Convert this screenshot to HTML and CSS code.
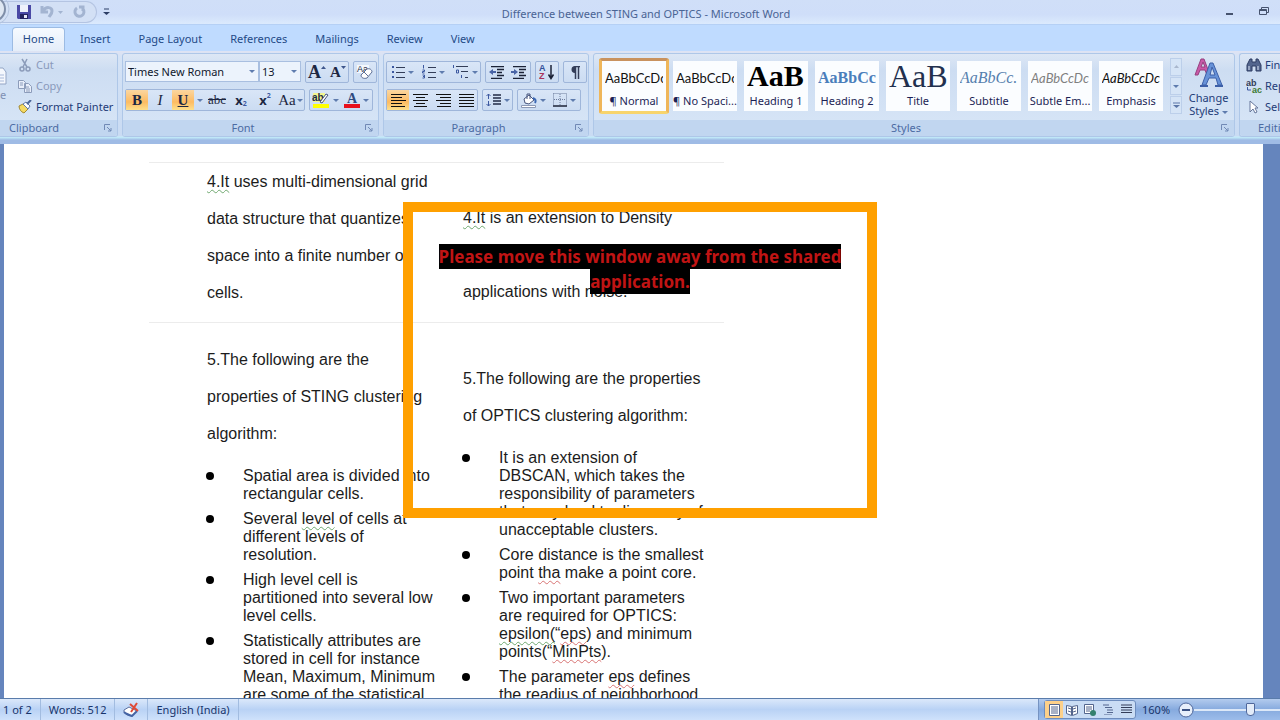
FILE: index.html
```html
<!DOCTYPE html>
<html lang="en">
<head>
<meta charset="utf-8">
<title>Difference between STING and OPTICS - Microsoft Word</title>
<link rel="stylesheet" href="styles.css">
</head>
<body>
<div class="app">
  <header class="titlebar">
    <div class="quick">
      <svg class="orb" width="12" height="24" viewBox="0 0 12 24"><circle cx="-7" cy="9" r="12" fill="#dfe7f2" stroke="#7f8ea8" stroke-width="2"/><circle cx="-7" cy="9" r="16" fill="none" stroke="#b3c4df"/></svg>
      <button class="qbtn" aria-label="Save"><svg width="14" height="14" viewBox="0 0 14 14"><path d="M0 0h14v14H1L0 13z" fill="#4a49a5"/><path d="M3 0h8v7H3z" fill="#eef1fb"/><path d="M3 9h8v5H3z" fill="#25245f"/><path d="M7 10h3v3H7z" fill="#e8e9f8"/></svg></button>
      <button class="qbtn" aria-label="Undo"><svg width="24" height="14" viewBox="0 0 24 14"><path d="M2 1v6h6M3 6C6 1 12 2 12 6c0 3-2 4-3 6" fill="none" stroke="#a3b4d1" stroke-width="3"/><path d="M18 6h5l-2.500 3z" fill="#a3b4d1"/></svg></button>
      <button class="qbtn" aria-label="Repeat"><svg width="13" height="14" viewBox="0 0 13 14"><path d="M4 3a4.500 4.500 0 1 0 6 1M6 2h4v4" fill="none" stroke="#a3b4d1" stroke-width="3"/></svg></button>
    </div>
    <button class="qmore" aria-label="Customize"><svg width="7" height="8" viewBox="0 0 7 8"><path d="M1 1h5" stroke="#2c3e66"/><path d="M0 4h7L3.500 7z" fill="#2c3e66"/></svg></button>
    <h1 class="title">Difference between STING and OPTICS - Microsoft Word</h1>
    <div class="winbtns">
      <button aria-label="Minimize"><svg width="8" height="10" viewBox="0 0 8 10"><path d="M0 7h7" stroke="#46536e" stroke-width="2"/></svg></button>
      <button aria-label="Restore"><svg width="10" height="10" viewBox="0 0 10 10"><path d="M2.500 2V.5h7v5H8M.5 2.500h7v5h-7zM.5 3.500h7" fill="none" stroke="#46536e"/></svg></button>
    </div>
  </header>

  <nav class="tabs">
    <button class="tab active">Home</button>
    <button class="tab">Insert</button>
    <button class="tab">Page Layout</button>
    <button class="tab">References</button>
    <button class="tab">Mailings</button>
    <button class="tab">Review</button>
    <button class="tab">View</button>
  </nav>

  <div class="ribbon">
    <section class="group clipboard">
      <div class="body clip-body">
        <div class="paste"><svg width="7" height="20" viewBox="0 0 7 20"><path d="M-2 2h5l3 4v12h-8z" fill="#f5f8fd" stroke="#93a5c4"/><path d="M0 9h4M0 12h4M0 15h4" stroke="#a9bada"/></svg><span>e</span></div>
        <div class="clip-list">
          <button class="cmd off"><svg width="14" height="14" viewBox="0 0 14 14"><path d="M4 1l5 8M9 1L5 9" stroke="#8c9cba" stroke-width="1.500"/><circle cx="4" cy="11" r="2" fill="none" stroke="#8c9cba" stroke-width="1.500"/><circle cx="10" cy="11" r="2" fill="none" stroke="#8c9cba" stroke-width="1.500"/></svg>Cut</button>
          <button class="cmd off"><svg width="14" height="14" viewBox="0 0 14 14"><path d="M.5 1.500h5l2 2v6h-7zM6.500 4.500h4l3 3v6h-7z" fill="#e8eefa" stroke="#8c9cba"/><path d="M2 4h3M2 6h3M8 8h3M8 10h4M8 12h4" stroke="#8c9cba"/></svg>Copy</button>
          <button class="cmd"><svg width="14" height="14" viewBox="0 0 14 14"><path d="M1 6l4-2 5 5-4 4c-3-1-5-4-5-7z" fill="#f5da62" stroke="#a38a35"/><path d="M5 4l3-2 4 4-2 3z" fill="#fff" stroke="#6178a4"/><path d="M9 4l4-4" stroke="#4a6597" stroke-width="2"/></svg>Format Painter</button>
        </div>
      </div>
      <footer><span>Clipboard</span><svg class="launch" width="8" height="8" viewBox="0 0 8 8"><path d="M.5 6V.5H6M3 3l4 4M7 4v3H4" fill="none" stroke="#7189b5"/></svg></footer>
    </section>

    <section class="group font">
      <div class="body rows">
        <div class="row">
          <div class="selects">
            <span class="sel sel-font"><select aria-label="Font"><option>Times New Roman</option></select></span>
            <span class="sel sel-size"><select aria-label="Font size"><option>13</option></select></span>
          </div>
          <div class="set"><button class="w22 serif big" aria-label="Grow font">A<svg width="5" height="14" viewBox="0 0 5 14"><path d="M0 4l2.500-3L5 4z" fill="#3e568c"/></svg></button><button class="w20 serif" aria-label="Shrink font">A<svg width="5" height="14" viewBox="0 0 5 14"><path d="M0 1h5L2.500 4z" fill="#3e568c"/></svg></button></div>
          <div class="set"><button class="w22" aria-label="Clear formatting"><svg width="18" height="16" viewBox="0 0 18 16"><path d="M1 1h12v8H1z" fill="#f4f8fd"/><text x="1" y="8" font-size="9" font-family="Liberation Sans" fill="#222b46">Aa</text><path d="M5 11l6-6c3-1 5 1 5 3l-5 6c-3 1-6 0-6-3z" fill="#fff" stroke="#5d6f96"/><path d="M8 8l4 4" stroke="#5d6f96"/></svg></button></div>
        </div>
        <div class="row">
          <div class="set">
            <button class="w22 serif on">B</button>
            <button class="w24 serif it">I</button>
            <button class="w22 serif on un">U</button>
            <button class="w12" aria-label="Underline style"><i class="arr"></i></button>
            <button class="w24 serif strike">abc</button>
            <button class="w24 scr" aria-label="Subscript">x<sub>2</sub></button>
            <button class="w24 scr" aria-label="Superscript">x<sup>2</sup></button>
            <button class="w27 aa serif">Aa<i class="arr"></i></button>
          </div>
          <div class="set">
            <button class="w32" aria-label="Highlight"><svg width="18" height="16" viewBox="0 0 18 16"><path d="M1 1h12v9H1z" fill="#f5f58f"/><text x="0" y="9" font-size="10" font-family="Liberation Sans" font-weight="bold" fill="#222b46">ab</text><path d="M8 10l6-8 2 1-6 8z" fill="#fff" stroke="#46547c"/><path d="M1 12h16v4H1z" fill="#ff0"/></svg><i class="arr"></i></button>
            <button class="w32" aria-label="Font color"><svg width="16" height="16" viewBox="0 0 16 16"><text x="3" y="11" font-size="14" font-family="Liberation Serif" font-weight="bold" fill="#2f4a80">A</text><path d="M0 12h16v4H0z" fill="#e8101c"/></svg><i class="arr"></i></button>
          </div>
        </div>
      </div>
      <footer><span>Font</span><svg class="launch" width="8" height="8" viewBox="0 0 8 8"><path d="M.5 6V.5H6M3 3l4 4M7 4v3H4" fill="none" stroke="#7189b5"/></svg></footer>
    </section>

    <section class="group para">
      <div class="body rows">
        <div class="row">
          <div class="set">
            <button class="w32" aria-label="Bullets"><svg width="14" height="14" viewBox="0 0 14 14"><path d="M5 2.500h9M5 7.500h9M5 12.500h9" stroke="#333d58"/><path d="M1 1h2v2H1zM1 6h2v2H1zM1 11h2v2H1z" fill="#3c58a0"/></svg><i class="arr"></i></button>
            <button class="w32" aria-label="Numbering"><svg width="14" height="14" viewBox="0 0 14 14"><path d="M6 2.500h8M6 7.500h8M6 12.500h8" stroke="#333d58"/><path d="M1.500 0v3.500M.5 5h2v1.500h-2V8h2M.5 10h2v3h-2M1 11.500h1" fill="none" stroke="#3c58a0"/></svg><i class="arr"></i></button>
            <button class="w32" aria-label="Multilevel list"><svg width="17" height="14" viewBox="0 0 17 14"><path d="M4 1.500h12M9 6.500h7M13 12.500h3" stroke="#333d58"/><path d="M1.500 0v3M4.500 5h2v3h-2zM9.500 10v3" fill="none" stroke="#3c58a0"/></svg><i class="arr"></i></button>
          </div>
          <div class="set">
            <button class="w22" aria-label="Decrease indent"><svg width="16" height="13" viewBox="0 0 16 13"><path d="M2 .5h13M8 3.500h7M8 6.500h5M8 9.500h7M2 12.500h11" stroke="#1b2236" stroke-width="1.500"/><path d="M0 6l4-3v2h3v2H4v2z" fill="#4964a6"/></svg></button>
            <button class="w22" aria-label="Increase indent"><svg width="16" height="13" viewBox="0 0 16 13"><path d="M2 .5h13M8 3.500h7M8 6.500h5M8 9.500h7M2 12.500h11" stroke="#1b2236" stroke-width="1.500"/><path d="M7 6L3 3v2H0v2h3v2z" fill="#4964a6"/></svg></button>
          </div>
          <div class="set"><button class="w22" aria-label="Sort"><svg width="16" height="16" viewBox="0 0 16 16"><text x="0" y="7" font-size="9" font-family="Liberation Sans" font-weight="bold" fill="#32509a">A</text><text x="0" y="15" font-size="9" font-family="Liberation Sans" font-weight="bold" fill="#a8325c">Z</text><path d="M12 1v12M9.500 10.500l2.500 4 2.500-4" fill="none" stroke="#1b2236" stroke-width="1.500"/></svg></button></div>
          <div class="set"><button class="w22" aria-label="Show marks"><svg width="10" height="13" viewBox="0 0 10 13"><path d="M10 .5H4.500M5.500 1v12M8.500 1v12" stroke="#333d58" stroke-width="1.500"/><path d="M5 0a3 3 0 0 0 0 7z" fill="#333d58"/></svg></button></div>
        </div>
        <div class="row">
          <div class="set">
            <button class="w22 on" aria-label="Align left"><svg width="15" height="13" viewBox="0 0 15 13"><path d="M0 .5h15M0 3.500h11M0 6.500h15M0 9.500h11M0 12.500h14" stroke="#111"/></svg></button>
            <button class="w22" aria-label="Center"><svg width="15" height="13" viewBox="0 0 15 13"><path d="M0 .5h15M3 3.500h9M0 6.500h15M3 9.500h9M1 12.500h13" stroke="#111"/></svg></button>
            <button class="w24" aria-label="Align right"><svg width="15" height="13" viewBox="0 0 15 13"><path d="M0 .5h15M4 3.500h11M0 6.500h15M4 9.500h11M1 12.500h14" stroke="#111"/></svg></button>
            <button class="w22" aria-label="Justify"><svg width="15" height="13" viewBox="0 0 15 13"><path d="M0 .5h15M0 3.500h15M0 6.500h15M0 9.500h15M0 12.500h15" stroke="#111"/></svg></button>
          </div>
          <div class="set"><button class="w29" aria-label="Line spacing"><svg width="15" height="14" viewBox="0 0 15 14"><path d="M7 2h8M7 5h8M7 8h8M7 11h8" stroke="#222b46" stroke-width="1.500"/><path d="M2.500 1v5M.5 3l2-2 2 2M2.500 8v5M.5 11l2 2 2-2" fill="none" stroke="#3c58a0"/></svg><i class="arr"></i></button></div>
          <div class="set">
            <button class="w32" aria-label="Shading"><svg width="16" height="15" viewBox="0 0 16 15"><path d="M3 6l5-4 5 5-5 4-4-1z" fill="#fff" stroke="#46547c"/><path d="M6 6V1h3v5" fill="none" stroke="#46547c"/><path d="M12 5c3 1 3 3 2 5" stroke="#3c68b4" stroke-width="2" fill="none"/><path d="M.5 12.500h14v2H.5z" fill="#fff" stroke="#8b98b5"/></svg><i class="arr"></i></button>
            <button class="w32" aria-label="Borders"><svg width="14" height="14" viewBox="0 0 14 14"><path d="M.5.5h13v12M.5.5v12M7 1v12M1 6.500h12" fill="none" stroke="#6d7c9d" stroke-dasharray="1 1"/><path d="M0 13h14" stroke="#1b2236" stroke-width="1.500"/></svg><i class="arr"></i></button>
          </div>
        </div>
      </div>
      <footer><span>Paragraph</span><svg class="launch" width="8" height="8" viewBox="0 0 8 8"><path d="M.5 6V.5H6M3 3l4 4M7 4v3H4" fill="none" stroke="#7189b5"/></svg></footer>
    </section>

    <section class="group styles">
      <div class="body style-body">
        <div class="gallery">
          <button class="card picked"><span class="pv">AaBbCcDc</span><span class="nm">¶ Normal</span></button>
          <button class="card"><span class="pv">AaBbCcDc</span><span class="nm">¶ No Spaci...</span></button>
          <button class="card"><span class="pv h1">AaB</span><span class="nm">Heading 1</span></button>
          <button class="card"><span class="pv h2">AaBbCc</span><span class="nm">Heading 2</span></button>
          <button class="card"><span class="pv ti">AaB</span><span class="nm">Title</span></button>
          <button class="card"><span class="pv su">AaBbCc.</span><span class="nm">Subtitle</span></button>
          <button class="card"><span class="pv se">AaBbCcDc</span><span class="nm">Subtle Em...</span></button>
          <button class="card"><span class="pv em">AaBbCcDc</span><span class="nm">Emphasis</span></button>
        </div>
        <div class="scroll">
          <button aria-label="Previous styles"><svg width="5" height="4" viewBox="0 0 5 4"><path d="M0 3h5L2.500 0z" fill="#a9b7cd"/></svg></button>
          <button aria-label="Next styles"><i class="arr"></i></button>
          <button aria-label="More styles"><svg width="7" height="7" viewBox="0 0 7 7"><path d="M0 1h7" stroke="#5c77a8"/><path d="M0 3h7L3.500 6z" fill="#5c77a8"/></svg></button>
        </div>
        <button class="change"><svg width="30" height="30" viewBox="0 0 30 30"><path d="M1 17L7 1h3l6 16h-3l-2-5H6l-2 5zM7 9h4L9 4z" fill="#c859a8" stroke="#96417f"/><path d="M8 27L16 5h3l9 22h-4l-2-7h-7l-3 7zM16 17h5l-3-8z" fill="#6792d8" stroke="#3d60a8"/><path d="M6 28h8M21 28h8" stroke="#3d60a8" stroke-width="2"/></svg><span>Change</span><span>Styles <i class="arr"></i></span></button>
      </div>
      <footer><span>Styles</span><svg class="launch" width="8" height="8" viewBox="0 0 8 8"><path d="M.5 6V.5H6M3 3l4 4M7 4v3H4" fill="none" stroke="#7189b5"/></svg></footer>
    </section>

    <section class="group editing">
      <div class="body clip-list">
        <button class="cmd"><svg width="16" height="14" viewBox="0 0 16 14"><path d="M4 1h2v3h4V1h2l3 6v6h-5V8H6v5H1V7z" fill="#53658d" stroke="#2e3d63"/><path d="M3 8v4M12 8v4" stroke="#dfe8f8"/></svg>Find</button>
        <button class="cmd"><svg width="16" height="14" viewBox="0 0 16 14"><text x="0" y="7" font-size="9" font-family="Liberation Sans" font-weight="bold" fill="#333d58">ab</text><text x="6" y="14" font-size="9" font-family="Liberation Sans" font-weight="bold" fill="#3c7a32">ac</text><path d="M1.500 8v3H5" stroke="#3c58a0" fill="none"/></svg>Replace</button>
        <button class="cmd"><svg width="16" height="14" viewBox="0 0 16 14"><path d="M4 1v11l3-3 2 4 2-1-2-4h3z" fill="#fff" stroke="#66769b"/></svg>Select</button>
      </div>
      <footer><span>Editing</span></footer>
    </section>
  </div>

  <main class="desk">
    <article class="page">
      <table class="cmp">
        <tr>
          <td class="l1"><p><u class="g">4.It</u> uses multi-dimensional grid<br>data structure that quantizes<br>space into a finite number of<br>cells.</p></td>
          <td class="r1"><p><u class="g">4.It</u> is an extension to Density<br>spatial clustering of<br>applications with noise.</p></td>
        </tr>
        <tr>
          <td class="l2"><p>5.The following are the<br>properties of STING clustering<br>algorithm:</p>
            <ul>
              <li>Spatial area is divided into<br>rectangular cells.</li>
              <li>Several <u class="g">level</u> of cells at<br>different levels of<br>resolution.</li>
              <li>High level cell is<br>partitioned into several low<br>level cells.</li>
              <li>Statistically attributes are<br>stored in cell for instance<br>Mean, Maximum, Minimum<br>are some of the statistical</li>
            </ul></td>
          <td class="r2"><p>5.The following are the properties<br>of OPTICS clustering algorithm:</p>
            <ul>
              <li>It is an extension of<br>DBSCAN, which takes the<br>responsibility of parameters<br>that may lead to discovery of<br>unacceptable clusters.</li>
              <li>Core distance is the smallest<br>point <u class="r">tha</u> make a point core.</li>
              <li>Two important parameters<br>are required for OPTICS:<br><u class="g">epsilon(</u>“<u class="r">eps</u>) and minimum<br>points(“<u class="r">MinPts</u>).</li>
              <li>The parameter <u class="r">eps</u> defines<br>the readius of neighborhood</li>
            </ul></td>
        </tr>
      </table>
    </article>
    <div class="warn"><p><span>Please move this window away from the shared<br>application.</span></p></div>
  </main>

  <footer class="status">
    <div class="st-left">
      <span class="cell">1 of 2</span>
      <span class="cell">Words: 512</span>
      <span class="cell"><svg width="16" height="15" viewBox="0 0 16 15"><path d="M1 8l5-3 8 4-5 5c-3 0-7-2-8-4z" fill="#fff" stroke="#5a6fa0"/><path d="M1 10c2 2 5 3 8 4l5-5" fill="none" stroke="#4564a4" stroke-width="2"/><path d="M7 2l8 7M14 1L8 10" stroke="#df4a36" stroke-width="2"/></svg></span>
      <span class="cell">English (India)</span>
    </div>
    <div class="st-right">
      <div class="views">
        <button class="on" aria-label="Print layout"><svg width="11" height="12" viewBox="0 0 11 12"><path d="M.5.5h10v11H.5z" fill="#fff" stroke="#53658d"/><path d="M2 3h7M2 5h7M2 7h7M2 9h7" stroke="#53658d"/></svg></button>
        <button aria-label="Full screen reading"><svg width="12" height="12" viewBox="0 0 12 12"><path d="M.5 1.500l5 1v9l-5-2zM11.500 1.500l-5 1v9l5-2z" fill="#fff" stroke="#53658d"/><path d="M2 4l3 1M2 7l3 1M10 4L7 5M10 7L7 8" stroke="#53658d"/></svg></button>
        <button aria-label="Web layout"><svg width="12" height="12" viewBox="0 0 12 12"><path d="M.5.5h9v9h-9z" fill="#fff" stroke="#53658d"/><path d="M2 3h6M2 5h6M2 7h4" stroke="#53658d"/><circle cx="9" cy="9" r="3" fill="#33806d"/></svg></button>
        <button aria-label="Outline"><svg width="11" height="11" viewBox="0 0 11 11"><path d="M0 1h6M2 3.500h7M4 6h6M4 8.500h6M1 11h8" stroke="#53658d"/></svg></button>
        <button aria-label="Draft"><svg width="11" height="11" viewBox="0 0 11 11"><path d="M0 1h11M0 3.500h11M0 6h11M0 8.500h11" stroke="#333d58"/></svg></button>
      </div>
      <span class="pct">160%</span>
      <button class="minus" aria-label="Zoom out"><svg width="16" height="16" viewBox="0 0 16 16"><circle cx="8" cy="8" r="7" fill="#e7effb" stroke="#4f679b"/><path d="M4 8h8" stroke="#3b5284" stroke-width="2"/></svg></button>
      <input class="zoom" type="range" min="0" max="100" value="50" aria-label="Zoom">
    </div>
  </footer>
</div>
</body>
</html>
```
FILE: styles.css
```css
* { box-sizing: border-box; }
body { margin: 0; font-family: "Noto Sans", "Open Sans", sans-serif; font-size: 11px; color: #1f3c78; }
button { font: inherit; color: inherit; background: none; border: 0; padding: 0; margin: 0; }
svg { display: block; flex: none; }
.app { height: 100vh; display: flex; flex-direction: column; overflow: hidden; }

.titlebar { flex: none; height: 25px; display: flex; align-items: center; background: linear-gradient(#d0dff8, #cfdef9 60%, #dbeafd); border-bottom: 1px solid #b5d0f5; }
.quick { display: flex; align-items: center; gap: 9px; width: 97px; height: 22px; border: 1px solid #b4c4e2; border-left: 0; border-radius: 0 11px 11px 0; background: #d3e0f5; }
.orb { margin-right: -4px; }
.qmore { margin-left: 6px; }
.title { flex: 1; margin: 0; padding: 2px 44px 0 0; text-align: center; font-size: 11px; font-weight: 400; color: #4a6494; white-space: nowrap; }
.winbtns { display: flex; gap: 25px; padding-right: 11px; }

.tabs { flex: none; height: 26px; display: flex; background: #bfdbff; padding-left: 12px; align-items: flex-end; }
.tab { height: 24px; padding: 0 12px 3px; margin-right: 2px; color: #244a87; border: 1px solid transparent; border-bottom: 0; white-space: nowrap; }
.tab.active { width: 53px; padding: 0 0 3px; background: linear-gradient(#f6faff, #e4edf9); border-color: #9cbbe3; border-radius: 4px 4px 0 0; }

.ribbon { flex: none; height: 93px; display: flex; gap: 4px; padding: 2px 0 7px; background: linear-gradient(#dfe3f3, #d5e3f6 6px, #c9dbf3 85px, #c6f0fb 86px, #9fbbe5 89px); }
.group { flex: none; display: flex; flex-direction: column; border: 1px solid #aec7e8; border-radius: 3px; background: linear-gradient(#dde7f5, #cdddf2 16px, #d8e6f7); overflow: hidden; }
.clipboard { width: 118px; border-left: 0; border-radius: 0 3px 3px 0; }
.font { width: 257px; }
.para { width: 206px; }
.styles { flex: 1; min-width: 0; }
.editing { width: 41px; border-right: 0; border-radius: 3px 0 0 3px; }
.body { flex: 1; min-height: 0; }
.group footer { flex: none; height: 16px; display: flex; align-items: center; background: #c1d6f0; color: #4c6ba3; padding: 0 5px 1px; }
.group footer span { flex: 1; text-align: center; line-height: 15px; }
.clipboard footer span { text-align: left; padding-left: 4px; }
.editing footer span { padding-left: 13px; text-align: left; }
.styles footer span { padding-right: 8px; }
.font footer span, .para footer span { padding-right: 7px; }

.clip-body { display: flex; }
.paste { width: 18px; padding-top: 12px; display: flex; flex-direction: column; gap: 2px; color: #7f90b3; line-height: 14px; }
.clip-list { display: flex; flex-direction: column; }
.cmd { flex: none; display: flex; align-items: center; gap: 4px; height: 21px; white-space: nowrap; }
.cmd.off { color: #8a9abb; }
.editing .cmd { padding-left: 6px; gap: 3px; }

.rows { display: flex; flex-direction: column; gap: 6px; padding: 7px 2px 0; }
.row { display: flex; gap: 4px; height: 22px; }
.set { display: flex; align-items: stretch; border: 1px solid #9fb6da; border-radius: 2px; background: linear-gradient(#d9e6f7, #cbdcf2); }
.set button { display: flex; align-items: center; justify-content: center; gap: 3px; color: #1d2742; }
.set .on { background: linear-gradient(#fbd6a0, #fdbb62 60%, #fee08c); }
.w12 { width: 11px; } .w20 { width: 20px; } .w22 { width: 22px; } .w24 { width: 24px; } .w27 { width: 27px; } .w29 { width: 29px; } .w32 { width: 31px; }
.arr { display: inline-block; border: 3px solid transparent; border-top-color: #5f7cae; border-bottom: 0; vertical-align: middle; }
.set .serif { font-family: "Liberation Serif", serif; font-weight: 700; font-size: 15px; gap: 0; }
.set .big { font-size: 18px; }
.set .it { font-style: italic; font-weight: 400; }
.set .un { text-decoration: underline; }
.set .strike { text-decoration: line-through; font-size: 13px; font-weight: 400; }
.set .scr { gap: 0; font-weight: 700; font-size: 13px; }
.scr sub, .scr sup { font-size: 7px; line-height: 8px; color: #3c58a0; }
.scr sub { align-self: flex-end; padding-bottom: 2px; }
.scr sup { align-self: flex-start; padding-top: 2px; }
.set .aa { font-weight: 400; gap: 1px; }

.selects { display: flex; }
.sel { position: relative; display: block; }
.sel select { appearance: none; width: 100%; height: 21px; border: 1px solid #a9bfe0; border-radius: 0; background: #ecf3fc; font: inherit; color: #10182c; padding: 0 2px; outline: 0; }
.sel::after { content: ""; position: absolute; right: 4px; top: 9px; border: 3px solid transparent; border-top-color: #5f7cae; border-bottom: 0; }
.sel-font { width: 134px; }
.sel-size { width: 42px; }

.style-body { display: flex; gap: 5px; padding: 4px 5px 0; }
.gallery { flex: none; display: flex; gap: 1px; }
.card { width: 70px; height: 56px; padding: 0; border: 3px solid transparent; background: #fbfdff; background-clip: padding-box; display: flex; flex-direction: column; align-items: center; overflow: hidden; white-space: nowrap; color: #1b1f55; }
.card.picked { border: 3px solid #efb65a; border-top-color: #c9925e; border-bottom-color: #f7d46c; border-radius: 3px; }
.pv { flex: none; height: 31px; line-height: 34px; width: 58px; overflow: hidden; text-align: left; font-family: Lato, sans-serif; font-size: 13px; color: #111; }
.nm { flex: none; line-height: 17px; text-align: center; }
.pv.h1 { font-family: "Liberation Serif", serif; font-weight: 700; font-size: 30px; line-height: 30px; color: #000; }
.pv.h2 { font-family: "Liberation Serif", serif; font-weight: 700; font-size: 16px; color: #4a7ebb; }
.pv.ti { font-family: "Liberation Serif", serif; font-size: 32px; line-height: 30px; color: #22304e; }
.pv.su { font-family: "Liberation Serif", serif; font-style: italic; font-size: 16px; color: #557fae; }
.pv.se { font-style: italic; color: #808080; }
.pv.em { font-style: italic; }
.scroll { width: 13px; display: flex; flex-direction: column; gap: 1px; margin-left: -1px; }
.scroll button { height: 18px; border: 1px solid #bccfea; background: #d5e4f6; display: flex; align-items: center; justify-content: center; }
.change { width: 44px; display: flex; flex-direction: column; align-items: center; line-height: 13px; margin-left: 1px; white-space: nowrap; align-self: flex-start; }
.change svg { margin-bottom: 3px; }

.desk { position: relative; flex: 1; min-height: 0; overflow: hidden; background: #6585bd; padding: 0 17px 0 4px; }
.page { height: 100%; overflow: hidden; background: #fff; padding: 18px 0 0 145px; color: #1c1c1c; font: 16px/18px "Liberation Sans", Arial, sans-serif; }
.cmp { border-collapse: collapse; width: 575px; table-layout: fixed; }
.cmp td { vertical-align: top; padding: 0 0 0 58px; border-top: 1px solid #ececec; white-space: nowrap; }
.cmp td + td { padding-left: 27px; }
.cmp p { margin: 0; line-height: 37px; }
.cmp .l1 { width: 287px; padding-bottom: 11px; }
.cmp .r1 { padding-top: 36px; }
.cmp .l2 { padding-top: 18px; }
.cmp .r2 { padding-top: 37px; }
.cmp ul { list-style: none; margin: 15px 0 0; padding: 0; display: flex; flex-direction: column; gap: 7px; }
.cmp li { position: relative; padding-left: 36px; }
.cmp li::before { content: ""; position: absolute; left: -1px; top: 5px; width: 8px; height: 8px; border-radius: 50%; background: #000; }
.cmp u { text-decoration: underline wavy 1px; text-underline-offset: 2px; text-decoration-skip-ink: none; }
.cmp u.g { text-decoration-color: #6fa86f; }
.cmp u.r { text-decoration-color: #d87474; }

.warn { position: absolute; left: 403px; top: 58px; width: 474px; height: 316px; border: 10px solid #ffa000; }
.warn p { margin: 32px 0 0; text-align: center; font: 700 17px/25px "Noto Sans", "Open Sans", sans-serif; color: #c01414; white-space: nowrap; }
.warn span { background: #000; padding: 1px 0; }

.status { flex: none; height: 22px; display: flex; border-top: 1px solid #5a7cab; color: #17346c; background: linear-gradient(#dbe8fa, #b9d2f5 50%, #cfe2fb); overflow: hidden; white-space: nowrap; }
.st-left { flex: 1; display: flex; }
.cell { display: flex; align-items: center; padding: 0 8px; border-right: 1px solid #a2bce0; }
.cell:first-child { padding-left: 3px; }
.st-right { width: 242px; display: flex; align-items: center; padding-left: 5px; overflow: hidden; border-left: 1px solid #7693c2; background: linear-gradient(#b3cbee, #86aade 50%, #9cbcea); }
.views { flex: none; display: flex; border: 1px solid #6d8cbd; border-radius: 3px; background: #c9dcf4; }
.views button { width: 18px; height: 17px; display: flex; align-items: center; justify-content: center; }
.views .on { background: #fcd08a; }
.pct { flex: none; margin-left: 6px; width: 36px; }
.minus { flex: none; }
.zoom { flex: none; appearance: none; width: 112px; height: 16px; margin: 0; background: linear-gradient(#dce8f8, #dce8f8) center / 100% 2px no-repeat; border: 0; }
.zoom::-webkit-slider-thumb { appearance: none; width: 9px; height: 13px; background: #e3ecf9; border: 1px solid #4f679b; border-radius: 1px 1px 4px 4px; }
```
